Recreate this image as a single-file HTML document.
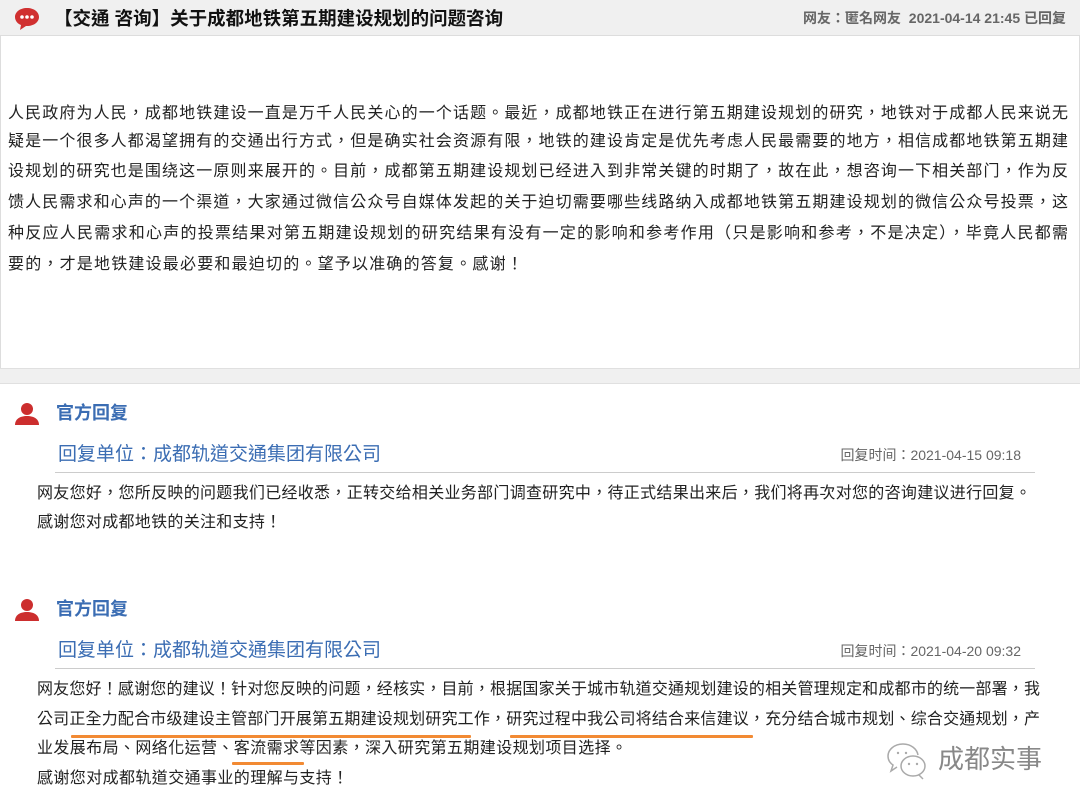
<!DOCTYPE html>
<html><head><meta charset="utf-8"><style>
*{margin:0;padding:0;box-sizing:border-box}
body{width:1080px;height:806px;overflow:hidden;background:#fff;font-family:"Liberation Sans","Noto Sans CJK TC",sans-serif;position:relative;color:#222}
.a{position:absolute;white-space:nowrap}
.j{position:absolute;text-align:justify;text-align-last:justify;white-space:nowrap;font-size:16px;height:24px;line-height:24px}
.t{font-size:16px;line-height:24px;letter-spacing:0.3px}
.blue{color:#3b6db3}
.ul{position:absolute;height:3px;background:#f28a33;border-radius:1px}
</style></head><body>
<div class="a" style="left:0;top:0;width:1080px;height:36px;background:#f0f0f0;border-bottom:1px solid #ddd"></div>
<svg class="a" style="left:14px;top:7px" width="26" height="24" viewBox="0 0 26 24"><path d="M13 1C6 1 1 5 1 10c0 4 3 7 6 8l-1 5 6-4h1c7 0 12-4 12-9S20 1 13 1z" fill="#d03030"/><circle cx="8" cy="10" r="1.8" fill="#fff"/><circle cx="13" cy="10" r="1.8" fill="#fff"/><circle cx="18" cy="10" r="1.8" fill="#fff"/></svg>
<div class="a" style="left:54px;top:6px;font-size:18.5px;font-weight:bold;line-height:26px;color:#111">【交通 咨询】关于成都地铁第五期建设规划的问题咨询</div>
<div class="a" style="right:14px;top:9px;font-size:14px;font-weight:bold;color:#666;line-height:18px">网友：匿名网友&nbsp;&nbsp;2021-04-14 21:45 已回复</div>
<div class="a" style="left:0;top:36px;width:1px;height:332px;background:#ddd"></div>
<div class="a" style="left:1079px;top:36px;width:1px;height:332px;background:#ddd"></div>

<div class="j" style="left:8px;top:102px;width:1060px">人民政府为人民，成都地铁建设一直是万千人民关心的一个话题。最近，成都地铁正在进行第五期建设规划的研究，地铁对于成都人民来说无</div>
<div class="j" style="left:8px;top:130px;width:1060px">疑是一个很多人都渴望拥有的交通出行方式，但是确实社会资源有限，地铁的建设肯定是优先考虑人民最需要的地方，相信成都地铁第五期建</div>
<div class="j" style="left:8px;top:160px;width:1060px">设规划的研究也是围绕这一原则来展开的。目前，成都第五期建设规划已经进入到非常关键的时期了，故在此，想咨询一下相关部门，作为反</div>
<div class="j" style="left:8px;top:191px;width:1060px">馈人民需求和心声的一个渠道，大家通过微信公众号自媒体发起的关于迫切需要哪些线路纳入成都地铁第五期建设规划的微信公众号投票，这</div>
<div class="j" style="left:8px;top:222px;width:1060px">种反应人民需求和心声的投票结果对第五期建设规划的研究结果有没有一定的影响和参考作用（只是影响和参考，不是决定），毕竟人民都需</div>
<div class="a t" style="left:8px;top:253px;letter-spacing:1.2px">要的，才是地铁建设最必要和最迫切的。望予以准确的答复。感谢！</div>

<div class="a" style="left:0;top:368px;width:1080px;height:16px;background:#f0f0f0;border-top:1px solid #e0e0e0;border-bottom:1px solid #e0e0e0"></div>

<svg class="a" style="left:15px;top:402px" width="24" height="23" viewBox="0 0 24 23"><circle cx="12" cy="7" r="6" fill="#cc2e2e"/><path d="M0 23c0-6 5-9 12-9s12 3 12 9z" fill="#cc2e2e"/></svg>
<div class="a blue" style="left:56px;top:401px;font-size:18px;font-weight:bold;line-height:24px">官方回复</div>
<div class="a blue" style="left:58px;top:443px;font-size:19px;line-height:24px">回复单位：成都轨道交通集团有限公司</div>
<div class="a" style="right:59px;top:446px;font-size:14px;color:#666;line-height:18px">回复时间：2021-04-15 09:18</div>
<div class="a" style="left:55px;top:472px;width:980px;height:1px;background:#ccc"></div>
<div class="a t" style="left:37px;top:482px">网友您好，您所反映的问题我们已经收悉，正转交给相关业务部门调查研究中，待正式结果出来后，我们将再次对您的咨询建议进行回复。</div>
<div class="a t" style="left:37px;top:511px">感谢您对成都地铁的关注和支持！</div>

<svg class="a" style="left:15px;top:598px" width="24" height="23" viewBox="0 0 24 23"><circle cx="12" cy="7" r="6" fill="#cc2e2e"/><path d="M0 23c0-6 5-9 12-9s12 3 12 9z" fill="#cc2e2e"/></svg>
<div class="a blue" style="left:56px;top:597px;font-size:18px;font-weight:bold;line-height:24px">官方回复</div>
<div class="a blue" style="left:58px;top:639px;font-size:19px;line-height:24px">回复单位：成都轨道交通集团有限公司</div>
<div class="a" style="right:59px;top:642px;font-size:14px;color:#666;line-height:18px">回复时间：2021-04-20 09:32</div>
<div class="a" style="left:55px;top:668px;width:980px;height:1px;background:#ccc"></div>
<div class="j" style="left:37px;top:678px;width:1003px">网友您好！感谢您的建议！针对您反映的问题，经核实，目前，根据国家关于城市轨道交通规划建设的相关管理规定和成都市的统一部署，我</div>
<div class="j" style="left:37px;top:708px;width:1003px">公司正全力配合市级建设主管部门开展第五期建设规划研究工作，研究过程中我公司将结合来信建议，充分结合城市规划、综合交通规划，产</div>
<div class="a t" style="left:37px;top:737px;letter-spacing:0.4px">业发展布局、网络化运营、客流需求等因素，深入研究第五期建设规划项目选择。</div>
<div class="a t" style="left:37px;top:767px;letter-spacing:0.4px">感谢您对成都轨道交通事业的理解与支持！</div>
<div class="ul" style="left:71px;top:735px;width:400px"></div>
<div class="ul" style="left:510px;top:735px;width:243px"></div>
<div class="ul" style="left:232px;top:762px;width:72px"></div>

<svg class="a" style="left:886px;top:742px" width="46" height="38" viewBox="0 0 46 38"><path d="M17 2C8 2 2 8 2 14c0 4 2 7 5 9l-2 6 6-4" fill="none" stroke="#aaa" stroke-width="1.5"/><path d="M17 2c8 0 14 5 15 11" fill="none" stroke="#aaa" stroke-width="1.5"/><ellipse cx="27" cy="24" rx="12" ry="10" fill="#fff" stroke="#aaa" stroke-width="1.5"/><path d="M33 33l4 4" stroke="#aaa" stroke-width="1.5"/><circle cx="12" cy="11" r="1.2" fill="#aaa"/><circle cx="20" cy="11" r="1.2" fill="#aaa"/><circle cx="23" cy="22" r="1.2" fill="#aaa"/><circle cx="31" cy="22" r="1.2" fill="#aaa"/></svg>
<div class="a" style="left:938px;top:743px;font-size:26px;color:#888;line-height:32px">成都实事</div>
</body></html>
